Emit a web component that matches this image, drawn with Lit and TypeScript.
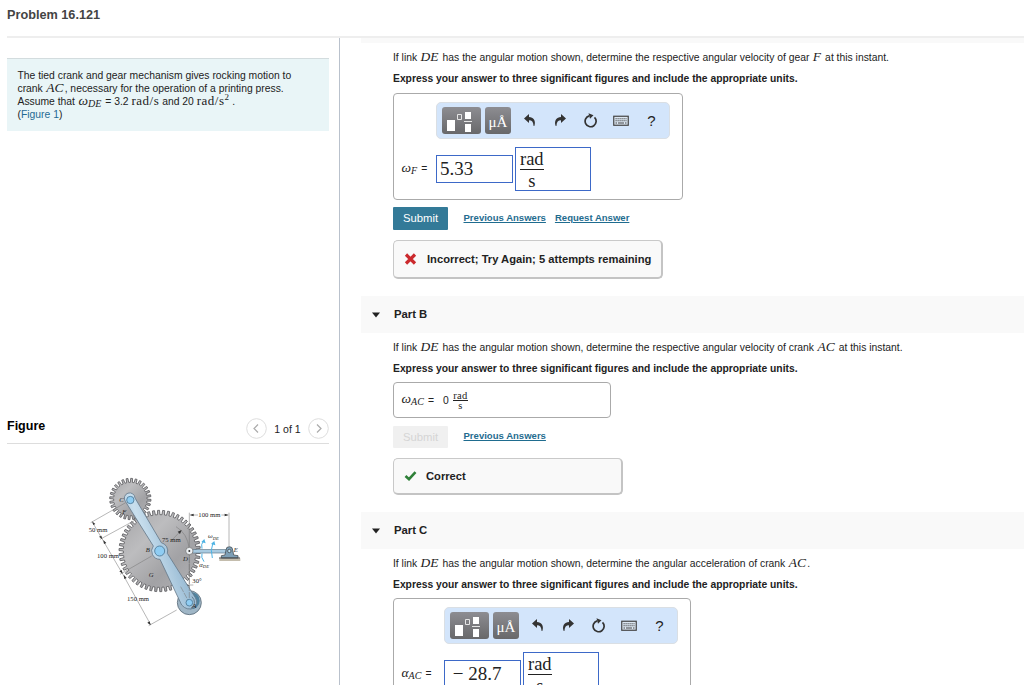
import { LitElement, html, svg, css, nothing } from "lit";
import { customElement, property } from "lit/decorators.js";

/* Outline of a spur gear: square teeth between the root and tip radius */
function gearPath(cx: number, cy: number, root: number, tip: number, teeth: number) {
	const step = (Math.PI * 2) / teeth;
	const points: string[] = [];
	for (let i = 0; i < teeth; i++) {
		const a = i * step;
		const corners = [
			[root, a],
			[tip, a + step * 0.08],
			[tip, a + step * 0.48],
			[root, a + step * 0.56],
		];
		for (const [r, t] of corners) {
			points.push(`${(cx + r * Math.cos(t)).toFixed(1)} ${(cy + r * Math.sin(t)).toFixed(1)}`);
		}
	}
	return `M${points.join("L")}Z`;
}

@customElement("gear-figure")
export class GearFigure extends LitElement {
	static styles = css`
		:host {
			display: block;
			width: 170px;
			height: 165px;
		}

		svg {
			display: block;
		}

		.tooth {
			fill: url(#steel);
			stroke: #5c5c5f;
			stroke-width: 2.5;
		}

		.dim {
			fill: none;
			stroke: #777;
			stroke-width: 1.6;
		}

		.head {
			fill: #333;
		}

		.arm {
			fill: url(#blue);
			stroke: #66798a;
			stroke-width: 2.5;
		}

		.pin {
			fill: #8fcdf3;
			stroke: #4d7896;
			stroke-width: 2.5;
		}

		.spin {
			fill: none;
			stroke: #4db3e4;
			stroke-width: 3;
		}

		.spin-head {
			fill: #4db3e4;
		}

		text {
			font: 20px "Liberation Serif", serif;
			fill: #222;
		}

		.it {
			font-style: italic;
		}

		.sub {
			font-size: 14px;
		}
	`;

	render() {
		return html`
			<svg width="170" height="165" viewBox="0 0 510 495">
				<defs>
					<linearGradient id="steel" x1="0" y1="0" x2="1" y2="1">
						<stop offset="0" stop-color="#a3a3a6"></stop>
						<stop offset="0.35" stop-color="#bdbdbf"></stop>
						<stop offset="0.65" stop-color="#a2a2a5"></stop>
						<stop offset="1" stop-color="#b4b4b7"></stop>
					</linearGradient>
					<linearGradient id="blue" x1="0" y1="0.6" x2="0.6" y2="0.3">
						<stop offset="0" stop-color="#9dbcd2"></stop>
						<stop offset="0.5" stop-color="#c9dfee"></stop>
						<stop offset="1" stop-color="#9dbed6"></stop>
					</linearGradient>
				</defs>

				<path class="tooth" d=${gearPath(151, 87, 50, 62, 28)}></path>
				<path class="tooth" d=${gearPath(239, 243, 109, 122, 50)}></path>

				<path
					class="dim"
					d="M137 98L32 158M170 148L60 208M215 258L120 313M38 158L66 206L128 312L212 464M290 420L206 467M328 128V395M447 128V228M332 135H354M424 135H443M288 170Q322 190 328 236M270 216L303 182M302 350Q314 344 327 346M340 345H330"
				></path>
				<path
					class="head"
					d="M36 154L46 162L40 165ZM67 208L57 200L64 197ZM70 210L79 219L72 222ZM128 311L118 304L125 300ZM131 314L140 324L133 327ZM212 466L202 458L209 454ZM329 135L341 131V139ZM446 135L434 131V139ZM305 180L300 192L293 185ZM303 350L314 343L314 352ZM328 346L318 342V350Z"
				></path>

				<circle cx="328" cy="398" r="36" fill="#9fb6c6" stroke="#5b6c79" stroke-width="2.5"></circle>
				<circle cx="333" cy="392" r="26" fill="#4f829f"></circle>
				<path
					class="arm"
					d="M136 94A16 16 0 1 1 165 84L244 218A25 25 0 0 1 262 250L346 383Q356 401 342 413Q322 424 305 405L240 268A25 25 0 0 1 220 228Z"
				></path>
				<path d="M336 380Q352 398 334 414" fill="none" stroke="#4a5a66" stroke-width="2"></path>
				<path class="dim" d="M328 240V395M302 350L328 398" stroke-dasharray="18 3"></path>
				<circle class="pin" cx="151" cy="90" r="11"></circle>
				<circle class="pin" cx="239" cy="243" r="15"></circle>
				<circle class="pin" cx="328" cy="398" r="10"></circle>

				<rect x="336" y="239" width="106" height="10" fill="#a9cbe1" stroke="#5d7688" stroke-width="2"></rect>
				<circle cx="328" cy="243" r="11" fill="#eef2f5" stroke="#777" stroke-width="2.5"></circle>
				<circle cx="328" cy="243" r="3" fill="#333"></circle>
				<rect x="418" y="265" width="63" height="8" fill="#c4bdad"></rect>
				<path d="M424 264V257L435 255L438 240A10 10 0 0 1 458 240L461 255L474 257V264Z" fill="#7d9fb6" stroke="#4d565c" stroke-width="2.5"></path>
				<circle cx="448" cy="243" r="5" fill="#bce1f5" stroke="#333" stroke-width="2"></circle>
				<path d="M417 264H480" stroke="#444" stroke-width="3"></path>

				<path class="spin" d="M366 236Q362 222 370 214M366 250Q362 262 372 275M397 264Q390 240 399 218"></path>
				<path class="spin-head" d="M373 207L377 220L364 216ZM403 213L406 226L393 222Z"></path>

				<text class="it" x="118" y="95">C</text>
				<text class="it" x="127" y="133">F</text>
				<text class="it" x="197" y="247">B</text>
				<text class="it" x="309" y="272">D</text>
				<text class="it" x="461" y="247">E</text>
				<text class="it" x="206" y="321">G</text>
				<text class="it" x="337" y="413">A</text>
				<text x="355" y="142">100 mm</text>
				<text x="26" y="187">50 mm</text>
				<text x="51" y="263">100 mm</text>
				<text x="141" y="394">150 mm</text>
				<text x="246" y="216">75 mm</text>
				<text x="337" y="338">30°</text>
				<text class="it" x="384" y="204">ω<tspan class="sub" dy="5">DE</tspan></text>
				<text class="it" x="358" y="290">α<tspan class="sub" dy="5">DE</tspan></text>
			</svg>
		`;
	}
}

@customElement("math-editor")
export class MathEditor extends LitElement {
	@property() value = "";

	static styles = css`
		:host {
			display: block;
			width: 234px;
		}

		.toolbar {
			box-sizing: border-box;
			height: 37px;
			display: flex;
			align-items: center;
			padding-left: 5px;
			background: #d3e5fb;
			border: 1px solid #dadfe4;
			border-radius: 5px;
		}

		.key {
			flex: none;
			height: 27px;
			border-radius: 3px;
			background: linear-gradient(#8d8d92, #68686a);
			display: flex;
			align-items: center;
			justify-content: center;
			color: #fff;
			font: 15px "Liberation Serif", serif;
		}

		.templates {
			width: 39px;
			margin-right: 4px;
		}

		.units {
			box-sizing: border-box;
			width: 26px;
			padding-top: 3px;
			margin-right: 4px;
		}

		.icon {
			flex: none;
			width: 30.3px;
			display: flex;
			justify-content: center;
		}

		.help {
			font: 15px "Liberation Sans", sans-serif;
			color: #222;
		}

		.fields {
			display: flex;
			align-items: center;
			gap: 2px;
			margin-top: 8px;
		}

		.field {
			box-sizing: border-box;
			width: 77px;
			height: 28px;
			border: 1px solid #3d69c8;
			padding-left: 3px;
			font: 19px/26px "Liberation Serif", serif;
			white-space: pre;
			color: #222;
		}

		.field.unit {
			width: 76px;
			height: 44px;
			padding: 2px 0 0 4px;
			font-size: 18.500px;
			white-space: nowrap;
		}

		.fraction {
			display: inline-block;
			text-align: center;
			line-height: 19px;
		}

		.top {
			display: block;
			height: 19px;
			border-bottom: 1px solid #222;
		}

		.bottom {
			display: block;
			line-height: 23px;
		}
	`;

	render() {
		return html`
			<div class="toolbar">
				<div class="key templates">
					<svg width="29" height="22" viewBox="0 0 29 22">
						<path d="M0 10h8v11H0zM18 2h6v7h-6zM18 14h6v8h-6z" fill="#fff"></path>
						<path d="M10.500 4.500h4v5h-4zM17 11.500h8" fill="none" stroke="#e5e5e5"></path>
					</svg>
				</div>
				<div class="key units">μÅ</div>
				<span class="icon">
					<svg width="12" height="13" viewBox="0 0 12 13">
						<path d="M0 4.500L5 0v3c4.500.2 7 3.800 5.500 8.500-.3.800-1 .7-1-.1C9.300 8 8 6.200 5 6.200V9z" fill="#333"></path>
					</svg>
				</span>
				<span class="icon">
					<svg width="12" height="13" viewBox="0 0 12 13">
						<path d="M12 4.500L7 0v3C2.500 3.200 0 6.800 1.500 11.500c.3.800 1 .7 1-.1C2.700 8 4 6.200 7 6.200V9z" fill="#333"></path>
					</svg>
				</span>
				<span class="icon">
					<svg width="14" height="15" viewBox="0 0 14 15">
						<path d="M5.200 2.900A5.500 5.500 0 1 0 10.500 4.300" fill="none" stroke="#333" stroke-width="1.700"></path>
						<path d="M4.500 .2L9.500 2.200L6 5.800z" fill="#333"></path>
					</svg>
				</span>
				<span class="icon">
					<svg width="16" height="11" viewBox="0 0 16 11">
						<rect x=".75" y="1.250" width="14.500" height="9" fill="#dce7f2" stroke="#444" stroke-width="1.200"></rect>
						<path d="M2.500 3.700h11M2.500 5.700h11" stroke="#444" stroke-width="1.100" stroke-dasharray="1.200 .8"></path>
						<path d="M2.500 8h1.500M5 8h6M12 8h1.500" stroke="#444" stroke-width="1.100"></path>
					</svg>
				</span>
				<span class="icon help">?</span>
			</div>
			<div class="fields">
				<div class="field">${this.value}</div>
				<div class="field unit">
					<span class="fraction"><span class="top">rad</span><span class="bottom">s</span></span>
				</div>
			</div>
		`;
	}
}

@customElement("app-root")
export class AppRoot extends LitElement {
	static styles = css`
		:host {
			display: block;
			height: 685px;
			overflow: hidden;
			background: #fff;
			color: #222;
			font: 10.350px/13px "Liberation Sans", Arial, sans-serif;
		}

		.header {
			box-sizing: border-box;
			height: 38px;
			margin-left: 7px;
			padding-top: 7px;
			border-bottom: 2px solid #eee;
			font-size: 12.700px;
			font-weight: 700;
			line-height: 17px;
			color: #444;
		}

		.columns {
			display: flex;
			height: 647px;
		}

		.left {
			box-sizing: border-box;
			width: 340px;
			padding: 20px 10px 0 7px;
			border-right: 1px solid #b9c1cc;
		}

		.statement {
			box-sizing: border-box;
			height: 73px;
			padding: 10px 10px 0 10.500px;
			background: #e9f5f7;
			border-top: 1px solid #d3dcde;
			white-space: nowrap;
		}

		.statement div {
			height: 13px;
		}

		.link {
			color: #1f6a94;
		}

		.m,
		.rm {
			font-family: "Liberation Serif", serif;
			font-size: 13.500px;
			line-height: 0;
		}

		.m {
			font-style: italic;
			margin: 0 1.200px 0 0.500px;
			vertical-align: 0.500px;
		}

		.rm {
			font-size: 13px;
			letter-spacing: 0.500px;
		}

		.m sub {
			font-size: 10px;
			vertical-align: -2px;
			line-height: 0;
		}

		.rm sup {
			font-size: 9px;
			line-height: 0;
			vertical-align: 5px;
		}

		.figure-bar {
			box-sizing: border-box;
			height: 28px;
			margin-top: 285px;
			display: flex;
			border-bottom: 1px solid #ddd;
		}

		.figure-title {
			flex: 1;
			font-size: 12.500px;
			font-weight: 700;
			line-height: 20px;
			color: #000;
		}

		.pager {
			display: flex;
			align-items: center;
			height: 24px;
			font-size: 10.500px;
		}

		.pager span {
			width: 41px;
			padding-top: 2px;
			text-align: center;
		}

		gear-figure {
			margin: 26px 0 0 73px;
		}

		.right {
			flex: 1;
			padding-left: 21px;
		}

		.strip {
			height: 5px;
			background: #f9f9f9;
		}

		.part-bar {
			height: 37px;
			display: flex;
			align-items: center;
			gap: 14px;
			padding-left: 11px;
			background: #f9f9f9;
			font-size: 11.300px;
			font-weight: 700;
		}

		.part {
			box-sizing: border-box;
			padding: 8px 0 0 32px;
			white-space: nowrap;
		}

		.part.a {
			height: 253px;
		}

		.part.b {
			height: 179px;
		}

		.question {
			height: 21px;
		}

		.express {
			height: 20px;
			font-size: 10.320px;
			font-weight: 700;
		}

		.part.a .express {
			height: 21px;
		}

		.answer {
			box-sizing: border-box;
			display: flex;
			border: 1px solid #aaa;
			border-radius: 4px;
			padding: 8px 0 0 8px;
		}

		.answer.a {
			width: 290px;
			height: 107px;
		}

		.answer.b {
			width: 218px;
			height: 36px;
			align-items: center;
			padding: 0 0 0 8px;
		}

		.answer.c {
			width: 298px;
			height: 107px;
		}

		.label {
			padding-top: 60px;
		}

		.label .m {
			margin-left: -0.500px;
		}

		.a .label {
			width: 34px;
		}

		.c .label {
			width: 42px;
		}

		.b .label {
			width: 41px;
			padding-top: 0;
		}

		.small-fraction {
			margin-left: 4.500px;
			text-align: center;
			letter-spacing: 0.300px;
			font: 10.500px/9px "Liberation Serif", serif;
		}

		.small-fraction b {
			display: block;
			font-weight: 400;
		}

		.small-fraction b:first-child {
			height: 9px;
			border-bottom: 1px solid #222;
		}

		.actions {
			display: flex;
			align-items: center;
			height: 23px;
			margin-top: 7px;
		}

		.submit {
			width: 55px;
			height: 23px;
			margin-right: 15.500px;
			border-radius: 1px;
			background: #337a98;
			color: #fff;
			font-size: 11.300px;
			line-height: 23px;
			text-align: center;
		}

		.submit.off {
			height: 22px;
			line-height: 22px;
			background: #f0f0f0;
			color: #d5d5d5;
		}

		.actions a {
			margin-right: 9px;
			padding-bottom: 2px;
			color: #1f6c8f;
			font-size: 9.550px;
			font-weight: 700;
			text-decoration: underline;
		}

		.feedback {
			box-sizing: border-box;
			display: flex;
			align-items: center;
			border: 1px solid #c9c9c9;
			border-right: 2px solid #c4c4c4;
			border-bottom: 2px solid #c4c4c4;
			border-radius: 5px;
			background: #f9f9f9;
			padding-left: 10px;
			font-size: 11.180px;
			font-weight: 700;
		}

		.feedback.wrong {
			width: 270px;
			height: 39px;
			margin-top: 10px;
			gap: 10px;
		}

		.feedback.right-answer {
			width: 230px;
			height: 37px;
			margin-top: 10px;
			gap: 9px;
		}
	`;

	renderQuestion(tail: unknown) {
		return html`
			<div class="question">If link <span class="m">DE</span> has the angular motion shown, determine the ${tail}</div>
			<div class="express">Express your answer to three significant figures and include the appropriate units.</div>
		`;
	}

	renderPartBar(name: string) {
		return html`
			<div class="part-bar">
				<svg width="8" height="6" viewBox="0 0 8 6"><path d="M0 .5h8L4 5.500z" fill="#222"></path></svg>
				${name}
			</div>
		`;
	}

	renderActions(done: boolean) {
		return html`
			<div class="actions">
				<div class="submit ${done ? "off" : ""}">Submit</div>
				<a>Previous Answers</a>
				${done ? nothing : html`<a>Request Answer</a>`}
			</div>
		`;
	}

	renderArrow(d: string) {
		return html`
			<svg width="21" height="21" viewBox="0 0 21 21" fill="none">
				<circle cx="10.500" cy="10.500" r="9.800" stroke="#ddd"></circle>
				${svg`<path d=${d} stroke="#aaa" stroke-width="1.200"></path>`}
			</svg>
		`;
	}

	render() {
		return html`
			<div class="header">Problem 16.121</div>
			<div class="columns">
				<div class="left">
					<div class="statement">
						<div>The tied crank and gear mechanism gives rocking motion to</div>
						<div>crank <span class="m">AC</span>, necessary for the operation of a printing press.</div>
						<div>
							Assume that <span class="m">ω<sub>DE</sub></span> = 3.2 <span class="rm">rad/s</span> and 20
							<span class="rm">rad/s<sup>2</sup></span> .
						</div>
						<div>(<span class="link">Figure 1</span>)</div>
					</div>
					<div class="figure-bar">
						<div class="figure-title">Figure</div>
						<div class="pager">
							${this.renderArrow("M12 6.500l-4 4 4 4")}
							<span>1 of 1</span>
							${this.renderArrow("M9 6.500l4 4-4 4")}
						</div>
					</div>
					<gear-figure></gear-figure>
				</div>

				<div class="right">
					<div class="strip"></div>
					<div class="part a">
						${this.renderQuestion(
							html`respective angular velocity of gear <span class="m">F</span> at this instant.`,
						)}
						<div class="answer a">
							<div class="label"><span class="m">ω<sub>F</sub></span> =</div>
							<math-editor value="5.33"></math-editor>
						</div>
						${this.renderActions(false)}
						<div class="feedback wrong">
							<svg width="13" height="12" viewBox="0 0 13 12">
								<path d="M2 1.500l9 9M11 1.500l-9 9" stroke="#cb2a2e" stroke-width="3.200"></path>
							</svg>
							Incorrect; Try Again; 5 attempts remaining
						</div>
					</div>

					${this.renderPartBar("Part B")}
					<div class="part b">
						${this.renderQuestion(
							html`respective angular velocity of crank <span class="m">AC</span> at this instant.`,
						)}
						<div class="answer b">
							<div class="label"><span class="m">ω<sub>AC</sub></span> =</div>
							0
							<div class="small-fraction"><b>rad</b><b>s</b></div>
						</div>
						${this.renderActions(true)}
						<div class="feedback right-answer">
							<svg width="13" height="10" viewBox="0 0 13 10">
								<path d="M1.500 5l3.500 3.200L11.500 1.200" fill="none" stroke="#2f8038" stroke-width="2.600"></path>
							</svg>
							Correct
						</div>
					</div>

					${this.renderPartBar("Part C")}
					<div class="part c">
						${this.renderQuestion(html`angular acceleration of crank <span class="m">AC</span>.`)}
						<div class="answer c">
							<div class="label"><span class="m">α<sub>AC</sub></span> =</div>
							<math-editor value=" − 28.7"></math-editor>
						</div>
					</div>
				</div>
			</div>
		`;
	}
}
